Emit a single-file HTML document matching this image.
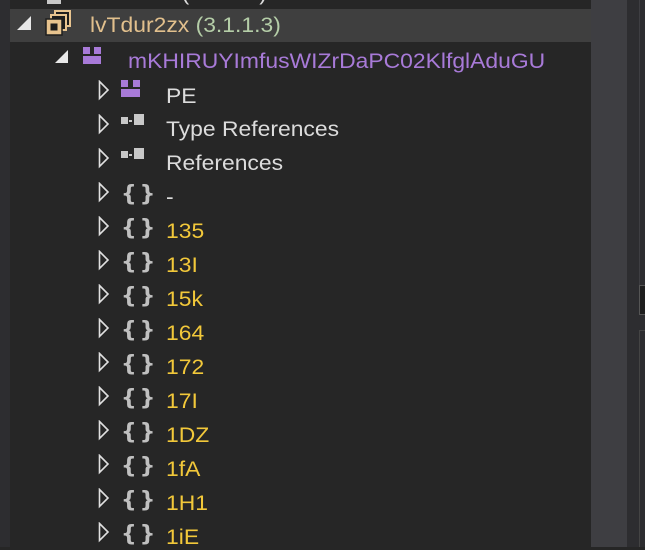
<!DOCTYPE html>
<html><head><style>
html,body{margin:0;padding:0;width:645px;height:547px;overflow:hidden;background:#262626;font-family:"Liberation Sans",sans-serif;}
.l{position:absolute;left:0;top:0;width:10px;height:547px;background:#2d2d30}
.sb{position:absolute;left:591px;top:0;width:36px;height:547px;background:#3e3e42}
.rs{position:absolute;left:627px;top:0;width:18px;height:547px;background:#2d2d30}
.sel{position:absolute;left:10px;top:9px;width:581px;height:33px;background:#3f3f3f}
.t{position:absolute;font-size:21px;line-height:24px;white-space:nowrap;color:#dcdcdc;transform:scaleX(1.09);transform-origin:0 0}
.y{color:#f2c83a}
.br{position:absolute;font-size:22px;line-height:24px;color:#c0c0c0;letter-spacing:3px;font-family:"DejaVu Sans",sans-serif;font-weight:bold}
svg{position:absolute}
</style></head><body>
<div class="l"></div><div class="sb"></div><div class="rs"></div>
<div style="position:absolute;left:639px;top:0;width:1px;height:285px;background:#3e3e42"></div>
<div style="position:absolute;left:639px;top:285px;width:6px;height:30px;border:1px solid #555;border-right:none;box-sizing:border-box;background:#1e1e1e"></div>
<div style="position:absolute;left:639px;top:330px;width:6px;height:217px;border:1px solid #444;border-right:none;border-bottom:none;box-sizing:border-box"></div>
<div class="sel"></div>
<div style="position:absolute;left:47px;top:0;width:14px;height:4px;background:#c8c8c8"></div>
<div class="t" style="left:90px;top:-18px;color:#dcdcdc">mscorlib (4.0.0.0)</div>
<svg style="left:16px;top:16px" width="16" height="16"><polygon points="15,0 15,14 1,14" fill="#e8e8e8"/></svg>
<svg style="left:44px;top:10px" width="30" height="28">
<rect x="11" y="1" width="15" height="15" fill="#1e1e1e" stroke="#e8c48f" stroke-width="2"/>
<rect x="7" y="5" width="15" height="15" fill="#1e1e1e" stroke="#e8c48f" stroke-width="2"/>
<rect x="2" y="9" width="16" height="16" fill="#e8c48f" stroke="#1e1e1e" stroke-width="1.5"/>
<rect x="6.5" y="13.5" width="7" height="7" fill="#1e1e1e"/>
</svg>
<div class="t" style="left:90px;top:14px;color:#e2c08d">lvTdur2zx <span style="color:#b5cea8">(3.1.1.3)</span></div>
<svg style="left:54px;top:50px" width="16" height="16"><polygon points="14,0 14,13 1,13" fill="#e8e8e8"/></svg>
<svg style="left:83px;top:47px" width="20" height="18"><rect x="0" y="0" width="7" height="7" fill="#a87ad8"/><rect x="11" y="0" width="7" height="7" fill="#a87ad8"/><rect x="0" y="9" width="18" height="8" fill="#a87ad8"/></svg>
<div class="t" style="left:128px;top:50px;color:#a87ad8">mKHIRUYImfusWIZrDaPC02KlfglAduGU</div>
<svg style="left:98px;top:80px" width="12" height="22"><polygon points="1.5,1.5 10,10 1.5,18.5" fill="none" stroke="#e0e0e0" stroke-width="1.6"/></svg>
<svg style="left:121px;top:80px" width="22" height="18"><rect x="0" y="0" width="7" height="7" fill="#a87ad8"/><rect x="12" y="0" width="7" height="7" fill="#a87ad8"/><rect x="0" y="9" width="19" height="8" fill="#a87ad8"/></svg>
<div class="t" style="left:166px;top:85px">PE</div>
<svg style="left:98px;top:114px" width="12" height="22"><polygon points="1.5,1.5 10,10 1.5,18.5" fill="none" stroke="#e0e0e0" stroke-width="1.6"/></svg>
<svg style="left:121px;top:114px" width="30" height="16"><rect x="0" y="3" width="7" height="7" fill="#c8c8c8"/><rect x="8" y="6" width="3" height="2" fill="#c8c8c8"/><rect x="13" y="0" width="10" height="11" fill="#c8c8c8"/></svg>
<div class="t" style="left:166px;top:118px">Type References</div>
<svg style="left:98px;top:148px" width="12" height="22"><polygon points="1.5,1.5 10,10 1.5,18.5" fill="none" stroke="#e0e0e0" stroke-width="1.6"/></svg>
<svg style="left:121px;top:148px" width="30" height="16"><rect x="0" y="3" width="7" height="7" fill="#c8c8c8"/><rect x="8" y="6" width="3" height="2" fill="#c8c8c8"/><rect x="13" y="0" width="10" height="11" fill="#c8c8c8"/></svg>
<div class="t" style="left:166px;top:152px">References</div>
<div id="ns"></div>
<script>
var items=[["-",""],["135","y"],["13I","y"],["15k","y"],["164","y"],["172","y"],["17I","y"],["1DZ","y"],["1fA","y"],["1H1","y"],["1iE","y"]];
var h="";
items.forEach(function(it,i){var c=198+34*i;
h+='<svg style="left:98px;top:'+(c-16)+'px" width="12" height="22"><polygon points="1.5,1.5 10,10 1.5,18.5" fill="none" stroke="#e0e0e0" stroke-width="1.6"/></svg>';
h+='<div class="br" style="left:121px;top:'+(c-15)+'px">{}</div>';
h+='<div class="t '+it[1]+'" style="left:166px;top:'+(c-12)+'px">'+it[0]+'</div>';});
document.getElementById("ns").innerHTML=h;
</script>
</body></html>
